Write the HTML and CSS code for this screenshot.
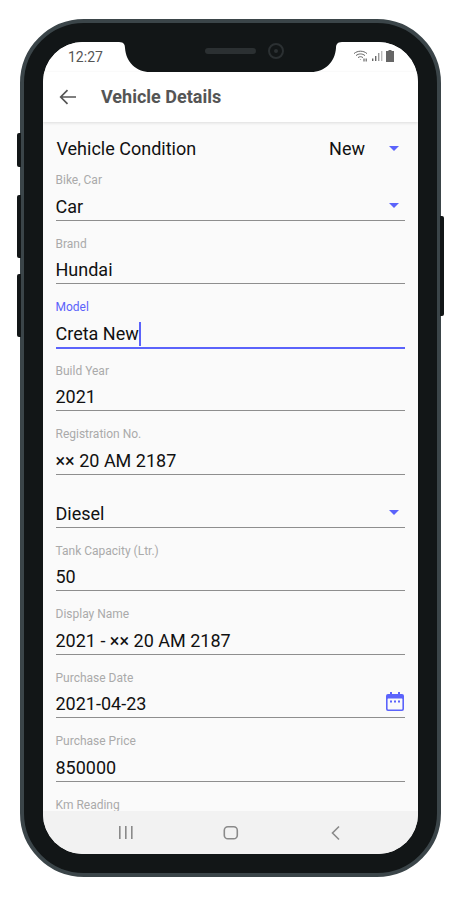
FILE: index.html
```html
<!DOCTYPE html>
<html lang="en">
<head>
    <meta charset="UTF-8">
    <meta name="viewport" content="width=device-width, initial-scale=1.0">
    <title>Vehicle Details</title>
    <link rel="stylesheet" href="styles.css">
</head>
<body>
    <div class="phone">
        <!-- Side buttons -->
        <span class="side-btn btn-mute"></span>
        <span class="side-btn btn-up"></span>
        <span class="side-btn btn-down"></span>
        <span class="side-btn btn-power"></span>

        <div class="screen">
            <!-- Notch -->
            <svg class="notch" width="223" height="31" viewBox="0 0 223 31">
                <path d="M0 0H223C218 0 217 3 217 6C216 20 206 30 192 30H31C17 30 7 20 6 6C6 3 5 0 0 0Z" fill="#121617"/>
            </svg>
            <span class="speaker"></span>
            <span class="camera"></span>

            <div class="status-bar">
                <span class="time">12:27</span>
                <div class="status-icons">
                    <svg width="16" height="12" viewBox="0 0 16 12" fill="none" stroke="#666" stroke-width="1">
                        <path d="M1 3.6C4.6 .4 10.4 .4 14 3.6"/>
                        <path d="M3 5.6C5.6 3.4 9.4 3.4 12 5.6"/>
                        <path d="M5 7.6C6.6 6.4 8.4 6.4 10 7.6"/>
                        <path d="M7.5 9.2v.6M11 8.6v3M13.2 8.6v3" stroke-width="1.2"/>
                    </svg>
                    <svg width="11" height="12" viewBox="0 0 11 12" fill="#666">
                        <rect x="0" y="8.5" width="1.4" height="2.5"/>
                        <rect x="3" y="6" width="1.4" height="5"/>
                        <rect x="6" y="3" width="1.4" height="8" fill="#999"/>
                        <rect x="9" y="1" width="1.4" height="10" fill="#bbb"/>
                    </svg>
                    <svg width="8" height="12" viewBox="0 0 8 12" fill="#666">
                        <path d="M2.5 0h3v1H8v11H0V1h2.5z"/>
                    </svg>
                </div>
            </div>

            <div class="app-bar">
                <svg class="back" width="18" height="16" viewBox="0 0 18 16" fill="none" stroke="#555" stroke-width="1.7">
                    <path d="M17 8H2M8.5 1.2L1.7 8l6.8 6.8"/>
                </svg>
                <span class="title">Vehicle Details</span>
            </div>

            <div class="content">
                <div class="condition-row">
                    <span>Vehicle Condition</span>
                    <span class="condition-value">New</span>
                    <span class="caret"></span>
                </div>

                <div class="field">
                    <label>Bike, Car</label>
                    <div class="value">Car<span class="caret"></span></div>
                </div>
                <div class="field">
                    <label>Brand</label>
                    <div class="value">Hundai</div>
                </div>
                <div class="field focused">
                    <label>Model</label>
                    <div class="value">Creta New<span class="cursor"></span></div>
                </div>
                <div class="field">
                    <label>Build Year</label>
                    <div class="value">2021</div>
                </div>
                <div class="field">
                    <label>Registration No.</label>
                    <div class="value">×× 20 AM 2187</div>
                </div>
                <div class="field no-label">
                    <div class="value">Diesel<span class="caret"></span></div>
                </div>
                <div class="field">
                    <label>Tank Capacity (Ltr.)</label>
                    <div class="value">50</div>
                </div>
                <div class="field">
                    <label>Display Name</label>
                    <div class="value">2021 - ×× 20 AM 2187</div>
                </div>
                <div class="field">
                    <label>Purchase Date</label>
                    <div class="value">2021-04-23
                        <svg class="calendar" width="18" height="19" viewBox="0 0 18 19">
                            <path fill="#5b63fb" d="M4 0h2v2h6V0h2v2h2a2 2 0 0 1 2 2v13a2 2 0 0 1-2 2H2a2 2 0 0 1-2-2V4a2 2 0 0 1 2-2h2z"/>
                            <rect x="1.6" y="6.4" width="14.8" height="11" rx=".6" fill="#fafafa"/>
                            <path fill="#5b63fb" d="M4 8.6h2v2H4zM8 8.6h2v2H8zM12 8.6h2v2h-2z"/>
                        </svg>
                    </div>
                </div>
                <div class="field">
                    <label>Purchase Price</label>
                    <div class="value">850000</div>
                </div>
                <div class="field">
                    <label>Km Reading</label>
                </div>
            </div>

            <div class="nav-bar">
                <svg width="16" height="14" viewBox="0 0 16 14" fill="#8a8a8a">
                    <rect x="1" y="0" width="1.6" height="13"/>
                    <rect x="7" y="0" width="1.6" height="13"/>
                    <rect x="13" y="0" width="1.6" height="13"/>
                </svg>
                <svg width="16" height="14" viewBox="0 0 16 14" fill="none" stroke="#8a8a8a" stroke-width="1.6">
                    <rect x="1.3" y=".8" width="13" height="12" rx="3.6"/>
                </svg>
                <svg width="12" height="16" viewBox="0 0 12 16" fill="none" stroke="#8a8a8a" stroke-width="1.6">
                    <path d="M9 1.5L2.5 8 9 14.5"/>
                </svg>
            </div>
        </div>
    </div>
</body>
</html>
```

FILE: styles.css
```css
* {
    box-sizing: border-box;
}

body {
    margin: 0;
    padding: 19px 0 0 20px;
    background-color: #fff;
    font-family: Roboto, "Liberation Sans", sans-serif;
}

.phone {
    position: relative;
    width: 421px;
    height: 858px;
    padding: 19px;
    background-color: #121617;
    border: 4px solid #3b4549;
    border-radius: 64px;
}

.side-btn {
    position: absolute;
    width: 4px;
    background-color: #121617;
}

.btn-mute {
    left: -7px;
    top: 110px;
    height: 34px;
    border-radius: 2px 0 0 2px;
}

.btn-up {
    left: -7px;
    top: 172px;
    height: 63px;
    border-radius: 2px 0 0 2px;
}

.btn-down {
    left: -7px;
    top: 251px;
    height: 63px;
    border-radius: 2px 0 0 2px;
}

.btn-power {
    right: -7px;
    top: 193px;
    height: 100px;
    border-radius: 0 2px 2px 0;
}

.screen {
    position: relative;
    display: flex;
    flex-direction: column;
    width: 375px;
    height: 812px;
    background-color: #fafafa;
    border-radius: 40px;
    overflow: hidden;
}

/* Notch */
.notch {
    position: absolute;
    left: 76px;
    top: 0;
}

.speaker {
    position: absolute;
    left: 162px;
    top: 6px;
    width: 51px;
    height: 6px;
    background-color: #2b3032;
    border-radius: 3px;
}

.camera {
    position: absolute;
    left: 225px;
    top: 1px;
    width: 16px;
    height: 16px;
    background-color: #121617;
    border: 2px solid #2b3032;
    border-radius: 50%;
}

.camera::after {
    content: "";
    display: block;
    width: 4px;
    height: 4px;
    margin: 4px;
    background-color: #2b3032;
    border-radius: 50%;
}

.status-bar {
    display: flex;
    justify-content: space-between;
    align-items: center;
    height: 30px;
    padding: 0 24px 0 25px;
    background-color: #fff;
}

.time {
    color: #555;
    font-size: 14px;
}

.status-icons {
    display: flex;
    align-items: center;
    gap: 3px;
    margin-bottom: 2px;
}

.app-bar {
    position: relative;
    display: flex;
    align-items: center;
    flex-shrink: 0;
    height: 50px;
    background-color: #fff;
    box-shadow: 0 1px 3px rgba(0, 0, 0, 0.12);
}

.back {
    margin-left: 16px;
}

.title {
    margin-left: 24px;
    margin-bottom: 1px;
    color: #555;
    font-size: 18px;
    font-weight: 700;
}

.content {
    flex: 1;
    padding: 0 13px 0 12.5px;
    overflow: hidden;
}

.condition-row {
    display: flex;
    align-items: center;
    height: 51.25px;
    padding-left: 1px;
    padding-top: 1px;
    color: #111;
    font-size: 18px;
}

.condition-value {
    margin-left: auto;
    margin-right: 24px;
}

.condition-row .caret {
    position: static;
    margin-right: 6px;
}

.caret {
    position: absolute;
    right: 6px;
    top: 13px;
    width: 0;
    height: 0;
    border-left: 5px solid transparent;
    border-right: 5px solid transparent;
    border-top: 5px solid #5b63fb;
}

.field {
    height: 63.5px;
}

.field label {
    display: block;
    height: 17px;
    color: #aaa;
    font-size: 12px;
    line-height: 14px;
}

.value {
    position: relative;
    height: 30.5px;
    padding-top: 4.5px;
    color: #111;
    font-size: 18px;
    line-height: 24px;
    border-bottom: 1px solid #8e8e8e;
}

.field.no-label {
    height: 53px;
    padding-top: 6.5px;
}

.focused label {
    color: #5b63fb;
}

.focused .value {
    height: 31.5px;
    border-bottom: 2px solid #5b63fb;
}

.cursor {
    display: inline-block;
    width: 2px;
    height: 24px;
    vertical-align: top;
    background-color: #5b63fb;
}

.calendar {
    position: absolute;
    right: 1px;
    top: 4px;
}

.nav-bar {
    display: grid;
    grid-template-columns: repeat(3, 105px);
    justify-items: center;
    align-items: center;
    flex-shrink: 0;
    height: 43px;
    padding-left: 30px;
    background-color: #f2f2f2;
}
```
